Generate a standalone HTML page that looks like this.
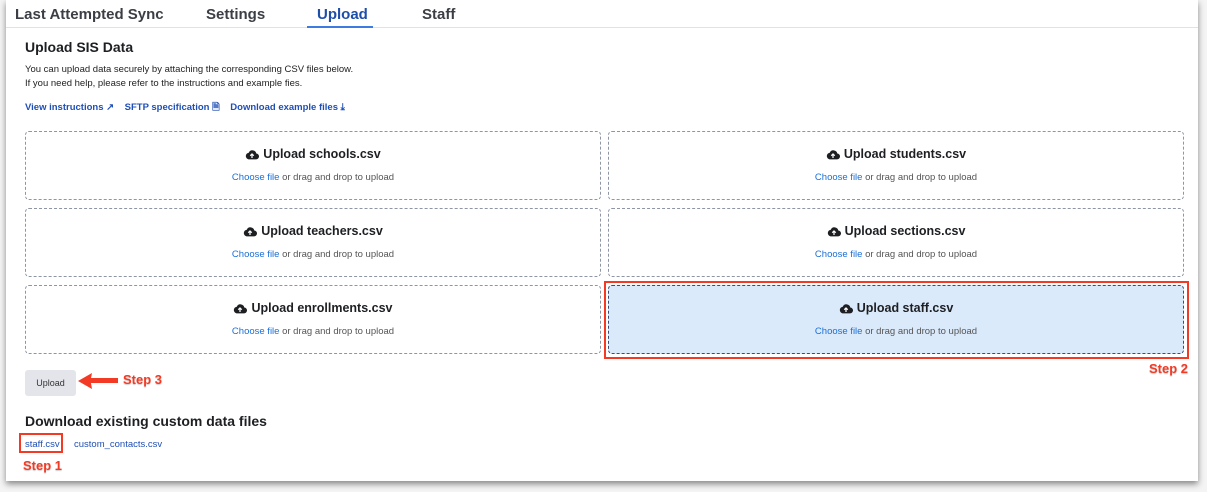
<!DOCTYPE html>
<html><head><style>
body{margin:0;width:1207px;height:492px;background:#f4f4f4;font-family:"Liberation Sans",sans-serif;position:relative;overflow:hidden}
.card{position:absolute;left:6px;top:0;width:1192px;height:481px;background:#fff;box-shadow:0 3px 6px rgba(0,0,0,.45)}
.a{position:absolute;white-space:nowrap}
.tab{position:absolute;top:6px;font-size:15px;font-weight:bold;color:#3b3f45}
.box{position:absolute;border:1px dashed #8e96a6;border-radius:4px;box-sizing:border-box;text-align:center}
.box .t{margin-top:15px;font-size:12.5px;font-weight:bold;color:#1d1f22}
.box .s{margin-top:11px;font-size:9.5px;color:#555}
.box .s b{color:#1a6fd6;font-weight:normal}
.link{color:#1f4fb5;font-size:9.5px;font-weight:bold}
.step{position:absolute;color:#f33a24;font-weight:bold;font-size:13px;text-shadow:0 1px 1px #ccc}
svg.c{vertical-align:-2px;margin-right:4px}
</style></head><body>
<div class="card">
<div class="tab" style="left:9px">Last Attempted Sync</div>
<div class="tab" style="left:200px">Settings</div>
<div class="tab" style="left:311px;color:#1e4fa8">Upload</div>
<div class="tab" style="left:416px">Staff</div>
<div class="a" style="left:0;top:27px;width:1192px;height:1px;background:#dde3ee"></div>
<div class="a" style="left:301px;top:26px;width:66px;height:2px;background:#3d7be0"></div>
<div class="a" style="left:19px;top:39px;font-size:14px;font-weight:bold;color:#1d1f22">Upload SIS Data</div>
<div class="a" style="left:19px;top:63px;font-size:9.5px;color:#222;line-height:14px">You can upload data securely by attaching the corresponding CSV files below.<br>If you need help, please refer to the instructions and example fies.</div>
<div class="a link" style="left:19px;top:100px">View instructions ↗&nbsp;&nbsp;&nbsp;&nbsp;SFTP specification 🗎&nbsp;&nbsp;&nbsp;&nbsp;Download example files ⤓</div>
</div>
<svg width="0" height="0" style="position:absolute"><defs><symbol id="cl" viewBox="0 0 16 12"><path d="M4 11.5h8.5a3.3 3.3 0 0 0 .4-6.6A4.5 4.5 0 0 0 4.3 4 3.8 3.8 0 0 0 4 11.5z" fill="#1d1f22"/><path d="M8 10V5.5M6 7.4l2-2 2 2" stroke="#fff" stroke-width="1.4" fill="none"/></symbol></defs></svg>
<div class="box" style="left:25px;top:131px;width:576px;height:69px"><div class="t"><svg class="c" width="14" height="11"><use href="#cl"/></svg>Upload schools.csv</div><div class="s"><b>Choose file</b> or drag and drop to upload</div></div>
<div class="box" style="left:608px;top:131px;width:576px;height:69px"><div class="t"><svg class="c" width="14" height="11"><use href="#cl"/></svg>Upload students.csv</div><div class="s"><b>Choose file</b> or drag and drop to upload</div></div>
<div class="box" style="left:25px;top:208px;width:576px;height:69px"><div class="t"><svg class="c" width="14" height="11"><use href="#cl"/></svg>Upload teachers.csv</div><div class="s"><b>Choose file</b> or drag and drop to upload</div></div>
<div class="box" style="left:608px;top:208px;width:576px;height:69px"><div class="t"><svg class="c" width="14" height="11"><use href="#cl"/></svg>Upload sections.csv</div><div class="s"><b>Choose file</b> or drag and drop to upload</div></div>
<div class="box" style="left:25px;top:285px;width:576px;height:69px"><div class="t"><svg class="c" width="14" height="11"><use href="#cl"/></svg>Upload enrollments.csv</div><div class="s"><b>Choose file</b> or drag and drop to upload</div></div>
<div class="a" style="left:604px;top:281px;width:581px;height:74px;border:2px solid #f33a24"></div>
<div class="box" style="left:608px;top:285px;width:576px;height:69px;background:#dbeafb;border-color:#3c4d72"><div class="t"><svg class="c" width="14" height="11"><use href="#cl"/></svg>Upload staff.csv</div><div class="s"><b>Choose file</b> or drag and drop to upload</div></div>
<div class="step" style="left:1149px;top:361px">Step 2</div>
<div class="a" style="left:25px;top:370px;width:51px;height:26px;background:#e3e5ea;border-radius:3px;font-size:9px;color:#333;text-align:center;line-height:26px">Upload</div>
<svg class="a" style="left:76px;top:371px" width="44" height="20"><path d="M2 10 L16 2 L15 7 L42 7 L42 12 L15 12 L16 18z" fill="#f33a24"/></svg>
<div class="step" style="left:123px;top:372px">Step 3</div>
<div class="a" style="left:25px;top:413px;font-size:14px;font-weight:bold;color:#1d1f22">Download existing custom data files</div>
<div class="a" style="left:19px;top:433px;width:44px;height:20px;border:2px solid #f33a24;box-sizing:border-box"></div>
<div class="a link" style="left:25px;top:439px;font-weight:normal;color:#1f4fb5">staff.csv</div>
<div class="a link" style="left:74px;top:439px;font-weight:normal;color:#1f4fb5">custom_contacts.csv</div>
<div class="step" style="left:23px;top:458px">Step 1</div>
</body></html>
